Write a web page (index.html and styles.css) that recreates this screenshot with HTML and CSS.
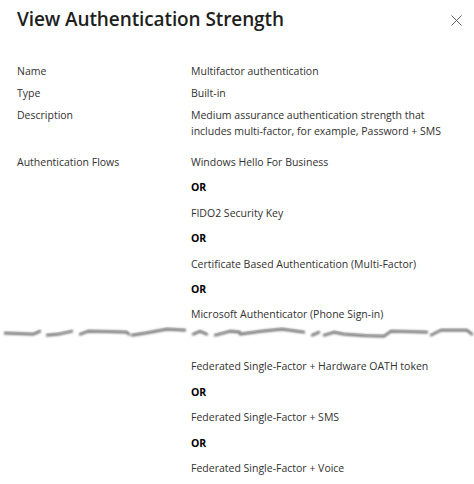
FILE: index.html
```html
<!DOCTYPE html>
<html lang="en">
<head>
<meta charset="utf-8">
<title>View Authentication Strength</title>
<link rel="stylesheet" href="styles.css">
</head>
<body>
<div class="panel">
  <header class="header">
    <h1 class="title">View Authentication Strength</h1>
    <button class="close" aria-label="Close">
      <svg width="11" height="11" viewBox="0 0 11 11"><path d="M0.5 0.5 L10.5 10.5 M10.5 0.5 L0.5 10.5" stroke="#605e5c" stroke-width="1" fill="none"/></svg>
    </button>
  </header>

  <div class="details">
    <div class="row">
      <div class="label">Name</div>
      <div class="value">Multifactor authentication</div>
    </div>
    <div class="row">
      <div class="label">Type</div>
      <div class="value">Built-in</div>
    </div>
    <div class="row">
      <div class="label">Description</div>
      <div class="value">Medium assurance authentication strength that<br>includes multi-factor, for example, Password + SMS</div>
    </div>
    <div class="row flows-row">
      <div class="label">Authentication Flows</div>
      <div class="value flows">
        <div class="flow">Windows Hello For Business</div>
        <div class="flow or">OR</div>
        <div class="flow">FIDO2 Security Key</div>
        <div class="flow or">OR</div>
        <div class="flow">Certificate Based Authentication (Multi-Factor)</div>
        <div class="flow or">OR</div>
        <div class="flow">Microsoft Authenticator (Phone Sign-in)</div>
      </div>
    </div>
  </div>

  <div class="tear" aria-hidden="true">
    <svg width="474" height="24" viewBox="0 0 474 24">
      <defs>
        <filter id="sh" x="-5%" y="-50%" width="110%" height="200%">
          <feGaussianBlur stdDeviation="0.8"/>
        </filter>
      </defs>
      <g fill="none" stroke-linecap="round" stroke-linejoin="round">
        <g stroke="#6e6e6e" stroke-width="2.4" filter="url(#sh)" transform="translate(0,1.3)">
          <path d="M5 11 L20 11.5 L33 12 L40 9"/>
          <path d="M47 13 L58 12 L72 9"/>
          <path d="M80 12 L88 9 L110 9.5 L127 10 L129 12"/>
          <path d="M132 13 L145 11 L167 7 L185 8"/>
          <path d="M193 12 L200 9 L207 12"/>
          <path d="M215 13 L230 9 L240 10"/>
          <path d="M240 12 L262 9 L282 7 L304 10"/>
          <path d="M312 13 L319 10"/>
          <path d="M324 13 L334 10 L344 12 L365 13.5 L384 14 L391 9 L410 9.5 L427 10"/>
          <path d="M431 13 L441 8 L467 8 L472 12"/>
        </g>
        <g stroke="#a8a8a8" stroke-width="0.8">
          <path d="M5 11 L20 11.5 L33 12 L40 9"/>
          <path d="M47 13 L58 12 L72 9"/>
          <path d="M80 12 L88 9 L110 9.5 L127 10 L129 12"/>
          <path d="M132 13 L145 11 L167 7 L185 8"/>
          <path d="M193 12 L200 9 L207 12"/>
          <path d="M215 13 L230 9 L240 10"/>
          <path d="M240 12 L262 9 L282 7 L304 10"/>
          <path d="M312 13 L319 10"/>
          <path d="M324 13 L334 10 L344 12 L365 13.5 L384 14 L391 9 L410 9.5 L427 10"/>
          <path d="M431 13 L441 8 L467 8 L472 12"/>
        </g>
      </g>
    </svg>
  </div>

  <div class="details lower">
    <div class="row">
      <div class="label"></div>
      <div class="value flows">
        <div class="flow">Federated Single-Factor + Hardware OATH token</div>
        <div class="flow or">OR</div>
        <div class="flow">Federated Single-Factor + SMS</div>
        <div class="flow or">OR</div>
        <div class="flow">Federated Single-Factor + Voice</div>
      </div>
    </div>
  </div>
</div>
</body>
</html>
```

FILE: styles.css
```css
html, body {
  margin: 0;
  padding: 0;
  background: #ffffff;
}

body {
  font-family: "Open Sans", "Noto Sans", sans-serif;
  color: #323130;
}

.panel {
  width: 474px;
  height: 484px;
  overflow: hidden;
}

.header {
  display: flex;
  justify-content: space-between;
  align-items: flex-start;
  padding: 5px 12px 0 17px;
}

.title {
  margin: 0;
  font-size: 19px;
  line-height: 28px;
  font-weight: 600;
  color: #201f1e;
  letter-spacing: -0.1px;
}

.close {
  border: 0;
  background: transparent;
  padding: 0;
  margin: 10px 0 0 0;
  width: 11px;
  height: 11px;
  display: flex;
}

.details {
  display: flex;
  flex-direction: column;
  padding: 30px 0 0 17px;
  font-size: 10.5px;
  line-height: 16px;
}

.row {
  display: grid;
  grid-template-columns: 174px 1fr;
  margin-bottom: 6px;
}

.row:nth-child(3) {
  margin-bottom: 15px;
}

.value {
  color: #323130;
}

.flows {
  display: flex;
  flex-direction: column;
  gap: 9.4px;
}

.or {
  font-weight: 700;
  color: #000000;
}

.tear {
  height: 24px;
  margin-top: -7px;
  display: flex;
}

.lower {
  padding-top: 13px;
}
```
